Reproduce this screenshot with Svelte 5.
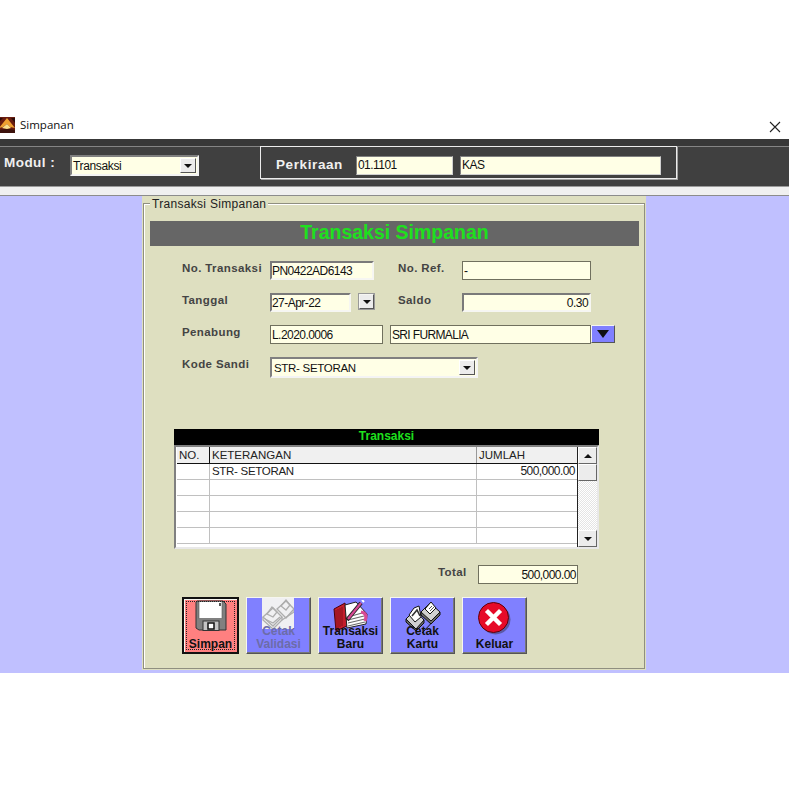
<script>
  const rows = [
    { ket: 'STR- SETORAN', jml: '500,000.00' },
    { ket: '', jml: '' },
    { ket: '', jml: '' },
    { ket: '', jml: '' },
    { ket: '', jml: '' }
  ];
</script>

<div class="page">
  <div class="titlebar">
    <svg class="appicon" width="16" height="16" viewBox="0 0 16 16">
      <rect width="16" height="16" fill="#6a1c10" />
      <path d="M0 1 L4 1 L0 5Z M16 1 L16 6 L12 1Z" fill="#2c0c08" />
      <path d="M8 1 L16 11 L11 10 L8 7 L4 10 L0 11 Z" fill="#f0a030" />
      <path d="M8 7 L12 11 L8 12 L3 11 Z" fill="#fbe08c" />
      <path d="M0 13 L6 12 L11 12 L16 13 L16 16 L0 16Z" fill="#3c120c" />
    </svg>
    <span class="title">Simpanan</span>
    <svg class="close" width="12" height="12" viewBox="0 0 12 12">
      <path d="M1 1 L11 11 M11 1 L1 11" stroke="#222" stroke-width="1.1" fill="none" />
    </svg>
  </div>

  <div class="toolbar">
    <span class="modul">Modul :</span>
    <div class="combo dark">
      <span class="val">Transaksi</span>
      <span class="arrowbtn"><i class="tri"></i></span>
    </div>
    <div class="perk">
      <span class="perk-label">Perkiraan</span>
      <span class="tb tb-dark w97">01.1101</span>
      <span class="tb tb-dark w201">KAS</span>
    </div>
  </div>
  <div class="strip"></div>

  <div class="main">
    <div class="panel">
      <div class="group">
        <span class="legend">Transaksi Simpanan</span>
        <div class="banner">Transaksi Simpanan</div>

        <div class="form">
          <div class="row">
            <span class="lbl">No. Transaksi</span>
            <span class="tb sunk w104">PN0422AD6143</span>
            <span class="lbl lbl2 g24">No. Ref.</span>
            <span class="tb flat w129">-</span>
          </div>
          <div class="row">
            <span class="lbl">Tanggal</span>
            <span class="tb sunk w81">27-Apr-22</span>
            <span class="spin"><i class="tri"></i></span>
            <span class="lbl lbl2 g23">Saldo</span>
            <span class="tb sunk w129 right">0.30</span>
          </div>
          <div class="row">
            <span class="lbl">Penabung</span>
            <span class="tb flat w113">L.2020.0006</span>
            <span class="tb flat w201 g7 name">SRI FURMALIA</span>
            <span class="pick"><i class="tri big"></i></span>
          </div>
          <div class="row">
            <span class="lbl">Kode Sandi</span>
            <div class="combo sandi">
              <span class="val">STR- SETORAN</span>
              <span class="arrowbtn"><i class="tri"></i></span>
            </div>
          </div>
        </div>

        <div class="tablewrap">
          <div class="tabletitle">Transaksi</div>
          <div class="grid">
            <div class="cols">
              <div class="ghead">
                <span class="c1">NO.</span><span class="c2">KETERANGAN</span><span class="c3">JUMLAH</span>
              </div>
              {#each rows as r}
                <div class="grow">
                  <span class="c1"></span><span class="c2">{r.ket}</span><span class="c3 right">{r.jml}</span>
                </div>
              {/each}
            </div>
            <div class="scroll">
              <span class="sbtn"><i class="tri up"></i></span>
              <span class="thumb"></span>
              <span class="track"></span>
              <span class="sbtn"><i class="tri"></i></span>
            </div>
          </div>
        </div>

        <div class="totalrow">
          <span class="lbl total">Total</span>
          <span class="tb flat w100 right">500,000.00</span>
        </div>

        <div class="buttons">
          <button class="btn focus">
            <svg class="ic floppy" width="32" height="32" viewBox="0 0 32 32">
              <path d="M2 1 H28 L31 4 V30 H4 L1 28 V2Z" fill="#808080" stroke="#333" />
              <rect x="4" y="1.5" width="23" height="17" fill="#fff" stroke="#555" stroke-width=".6" />
              <rect x="24" y="3" width="2" height="3" fill="#555" />
              <rect x="8" y="21" width="16" height="9.5" fill="#c4c4c4" stroke="#333" />
              <rect x="13" y="23" width="6" height="6" fill="#fff" stroke="#111" stroke-width="1.5" />
            </svg>
            <span class="cap">Simpan</span>
          </button>
          <button class="btn disabled">
            <span class="whiteblock"></span>
            <svg class="ic icv" width="32" height="30" viewBox="0 0 32 30">
              <g fill="none" stroke="#adadad" stroke-width="1.3">
                <path d="M1 18 L11 9 L20 18 L11 27Z" />
                <path d="M5 15 L10 8 L15 13 L11 18Z" />
                <path d="M3 20 L11 24 L18 18" />
                <path d="M1 18 V21 L11 30 L20 21 V18" />
                <path d="M15 10 L24 2 L32 10 L24 19Z" />
                <path d="M19 7 L24 1 L28 6 L24 11Z" />
                <path d="M20 21 L32 13 V10" />
              </g>
            </svg>
            <span class="cap two">Cetak<br />Validasi</span>
          </button>
          <button class="btn">
            <svg class="ic icb" width="38" height="32" viewBox="0 0 38 32">
              <path d="M1 9 L12 3 L14 26 L3 31Z" fill="#c41e2c" stroke="#4a0008" />
              <path d="M3 10 L3 29 M5 9 L5 28 M7 8 L7 27 M9 7 L9 26" stroke="#7a0c18" stroke-width=".8" />
              <path d="M12 5 L23 2 L34 14 L33 24 L14 28Z" fill="#fff" stroke="#222" />
              <path d="M15 17 L29 13 M15 20 L31 16 M15 23 L32 19 M15 26 L32 22" stroke="#6c6c6c" stroke-width="1.1" />
              <path d="M14 20 L28 3" stroke="#222" stroke-width="4" />
              <path d="M15 19 L28 3" stroke="#d84a94" stroke-width="2.2" />
              <path d="M29 0 L31 2" stroke="#fff" stroke-width="2" />
              <path d="M28 12 Q35 13 32 21" stroke="#d84a94" stroke-width="3.2" fill="none" />
            </svg>
            <span class="cap two">Transaksi<br />Baru</span>
          </button>
          <button class="btn">
            <svg class="ic icp" width="36" height="33" viewBox="0 0 36 33">
              <path d="M35 13 L17 32" fill="none" stroke="#111" />
              <path d="M1 18 V21 L11 30 L19 22 V19Z" fill="#6a6a6a" stroke="#111" />
              <path d="M1 18 L10 9 L19 19 L11 28Z" fill="#d0d0d0" stroke="#111" />
              <path d="M4 14 L9 7 L14 5 L16 16 L10 21Z" fill="#fff" stroke="#111" />
              <path d="M7 15 L12 9 L15 15" fill="none" stroke="#333" stroke-width="1.6" />
              <path d="M16 11 V14 L26 23 L35 14 V11Z" fill="#6a6a6a" stroke="#111" />
              <path d="M16 11 L25 2 L35 11 L26 20Z" fill="#d0d0d0" stroke="#111" />
              <path d="M20 8 L26 1 L31 7 L25 13Z" fill="#fff" stroke="#111" />
              <path d="M24 8 L27 5 M25 10 L29 6" stroke="#555" />
            </svg>
            <span class="cap two">Cetak<br />Kartu</span>
          </button>
          <button class="btn">
            <svg class="ic ick" width="34" height="34" viewBox="0 0 34 34">
              <circle cx="17.5" cy="17.5" r="15" fill="#5a5aa8" />
              <circle cx="15.5" cy="15.5" r="15" fill="#e60a28" stroke="#60000a" />
              <path d="M10 10 L21 21 M21 10 L10 21" stroke="#fff" stroke-width="4.4" stroke-linecap="square" />
            </svg>
            <span class="cap">Keluar</span>
          </button>
        </div>
      </div>
    </div>
  </div>
</div>

<style>
  :global(body) {
    margin: 0;
    background: #fff;
    font-family: "Liberation Sans", Arial, sans-serif;
  }
  .page {
    width: 789px;
    height: 789px;
    overflow: hidden;
    display: flex;
    flex-direction: column;
    padding-top: 110px;
    box-sizing: border-box;
  }
  .titlebar {
    height: 29px;
    flex: none;
    display: flex;
    align-items: center;
    background: #fff;
  }
  .appicon { margin-left: -1px; margin-top: 1px; }
  .title {
    margin-left: 5px;
    font: 11.5px "Open Sans", sans-serif;
    color: #111;
  }
  .close { margin-left: auto; margin-right: 8px; margin-top: 5px; }

  .toolbar {
    height: 48px;
    flex: none;
    background: linear-gradient(#383838 0 7px, #858585 7px 8px, #404040 8px);
    border-bottom: 1px solid #9a9a9a;
    box-sizing: border-box;
    display: flex;
    align-items: flex-start;
  }
  .modul {
    margin: 15px 0 0 4px;
    width: 66px;
    font: bold 13.5px/18px "Liberation Sans", sans-serif;
    letter-spacing: .45px;
    color: #f0f0f0;
    white-space: nowrap;
  }
  .combo {
    display: flex;
    align-items: center;
    justify-content: space-between;
    box-sizing: border-box;
    background: #ffffe6;
    border: 2px solid;
    border-color: #808080 #f4f4f4 #f4f4f4 #808080;
    padding-right: 1px;
    color: #111;
    font-size: 12px;
    letter-spacing: -.35px;
  }
  .combo.dark {
    width: 129px;
    height: 21px;
    margin-top: 16px;
  }
  .combo.sandi { width: 208px; height: 21px; letter-spacing: -.3px; font-size: 11.5px; }
  .val { padding-left: 1px; white-space: nowrap; }
  .sandi .val { padding-left: 2px; }
  .arrowbtn {
    width: 16px;
    height: 15px;
    background: #ececec;
    border: 1px solid;
    border-color: #fff #555 #555 #fff;
    box-sizing: border-box;
    display: flex;
    align-items: center;
    justify-content: center;
  }
  .tri {
    display: block;
    width: 0;
    height: 0;
    border-left: 4px solid transparent;
    border-right: 4px solid transparent;
    border-top: 4px solid #111;
  }
  .tri.up { border-top: 0; border-bottom: 4px solid #111; }
  .tri.big {
    border-left-width: 6px;
    border-right-width: 6px;
    border-top: 8px solid #111;
  }
  .perk {
    margin: 7px 0 0 61px;
    width: 417px;
    height: 33px;
    box-sizing: border-box;
    border: 1px solid #ececec;
    box-shadow: 1px 1px 0 #a0a0a0;
    display: flex;
    align-items: center;
    padding-left: 15px;
  }
  .perk-label {
    font: bold 13.5px/18px "Liberation Sans", sans-serif;
    letter-spacing: .6px;
    color: #f0f0f0;
    width: 80px;
    white-space: nowrap;
    margin-top: 4px;
  }
  .tb {
    display: flex;
    align-items: center;
    height: 19px;
    box-sizing: border-box;
    background: #ffffe6;
    color: #111;
    font-size: 12px;
    letter-spacing: -.55px;
    padding: 0 1px 0 1px;
    white-space: nowrap;
  }
  .name { letter-spacing: -.65px; }
  .right { justify-content: flex-end; text-align: right; }
  .tb-dark { border: 1px solid; border-color: #808080 #d0d0d0 #d0d0d0 #808080; margin-top: 5px; }
  .tb-dark + .tb-dark { margin-left: 7px; }
  .sunk { border: 2px solid; border-color: #7a7a7a #f6f6f2 #f6f6f2 #7a7a7a; padding-left: 0; }
  .flat { border: 1px solid #70705e; }
  .w81 { width: 81px; }
  .w97 { width: 97px; }
  .w100 { width: 100px; }
  .w104 { width: 104px; }
  .w113 { width: 113px; }
  .w129 { width: 129px; }
  .w201 { width: 201px; }
  .g7 { margin-left: 7px; }
  .g23 { margin-left: 23px; }
  .g24 { margin-left: 24px; }

  .strip {
    height: 8px;
    flex: none;
    background: #f0f0f0;
    border-bottom: 1px solid #8c8c8c;
  }
  .main {
    height: 477px;
    flex: none;
    background: #c0c0ff;
    padding-left: 142px;
    box-sizing: border-box;
  }
  .panel {
    width: 504px;
    height: 474px;
    box-sizing: border-box;
    background: #dedfc0;
    padding: 7px 1px 1px;
  }
  .group {
    position: relative;
    height: 100%;
    box-sizing: border-box;
    border: 1px solid #8f8f80;
    box-shadow: inset 1px 1px 0 #fff;
    padding: 17px 5px 0 6px;
  }
  .legend {
    position: absolute;
    left: 6px;
    top: -7px;
    padding: 0 2px;
    background: #dedfc0;
    font-size: 12px;
    line-height: 14px;
    letter-spacing: .3px;
    color: #222;
  }
  .banner {
    height: 25px;
    width: 489px;
    background: #666;
    color: #1ee01e;
    font: bold 19.5px/23px "Liberation Sans", sans-serif;
    text-align: center;
  }
  .form { margin: 15px 0 0 32px; }
  .row { height: 32px; display: flex; align-items: flex-start; }
  .lbl {
    width: 88px;
    flex: none;
    font: bold 11.5px/15px "Liberation Sans", sans-serif;
    letter-spacing: .4px;
    color: #444;
    white-space: nowrap;
  }
  .lbl2 { width: 64px; }
  .spin {
    width: 17px;
    height: 17px;
    margin-left: 7px;
    box-sizing: border-box;
    background: #ececec;
    border: 2px solid;
    border-color: #f6f6f2 #555 #555 #f6f6f2;
    outline: 1px solid #999;
    outline-offset: -1px;
    display: flex;
    align-items: center;
    justify-content: center;
  }
  .pick {
    width: 24px;
    height: 18px;
    background: #8080ff;
    box-sizing: border-box;
    border: 1px solid;
    border-color: #f4f4f4 #555 #555 #f4f4f4;
    display: flex;
    align-items: center;
    justify-content: center;
  }

  .tablewrap { margin: 40px 0 0 24px; width: 425px; }
  .tabletitle {
    height: 16px;
    background: #000;
    color: #1ee01e;
    font: bold 12px/15px "Liberation Sans", sans-serif;
    text-align: center;
  }
  .grid {
    height: 104px;
    background: #fff;
    box-sizing: border-box;
    border: 2px solid;
    border-color: #808080 #e8e8e8 #e8e8e8 #808080;
    padding-left: 1px;
    display: flex;
    overflow: hidden;
  }
  .cols { width: 400px; flex: none; border-right: 1px solid #222; overflow: hidden; }
  .ghead {
    height: 17px;
    display: flex;
    background: #f0f0f0;
    border-bottom: 1px solid #111;
    box-sizing: border-box;
    font-size: 11.5px;
    line-height: 17px;
    color: #222;
  }
  .grow {
    height: 16px;
    display: flex;
    box-sizing: border-box;
    border-bottom: 1px solid #c0c0c0;
    font-size: 11.5px;
    line-height: 15px;
    color: #222;
    letter-spacing: -.3px;
  }
  .c1 { width: 33px; flex: none; padding-left: 2px; box-sizing: border-box; border-right: 1px solid #c0c0c0; }
  .c2 { width: 267px; flex: none; padding-left: 2px; box-sizing: border-box; border-right: 1px solid #c0c0c0; }
  .c3 { width: 100px; flex: none; padding: 0 2px; box-sizing: border-box; }
  .grow .c3 { font-size: 12px; letter-spacing: -.55px; }
  .ghead .c1 { border-right-color: #111; }
  .ghead .c2 { border-right-color: #999; }
  .scroll { width: 19px; flex: none; display: flex; flex-direction: column; background: #f2f2f2; }
  .sbtn, .thumb {
    height: 17px;
    flex: none;
    box-sizing: border-box;
    background: #ececec;
    border: 1px solid;
    border-color: #fff #666 #666 #fff;
    display: flex;
    align-items: center;
    justify-content: center;
  }
  .track {
    flex: 1;
    background-image: repeating-conic-gradient(#fff 0 25%, #e4e4e4 0 50%);
    background-size: 2px 2px;
  }

  .totalrow { margin: 16px 0 0 288px; display: flex; height: 19px; }
  .total { width: 40px; }

  .buttons { margin: 13px 0 0 32px; display: flex; gap: 7px; }
  .btn {
    position: relative;
    width: 65px;
    height: 57px;
    padding: 0 0 2px;
    box-sizing: border-box;
    background: #8080ff;
    border: 1px solid;
    border-color: #f6f6f0 #555 #555 #f6f6f0;
    box-shadow: inset -1px -1px 0 #777;
    display: flex;
    flex-direction: column;
    justify-content: flex-end;
    align-items: center;
    font: bold 12px/13px "Liberation Sans", sans-serif;
    letter-spacing: 0;
    color: #111;
  }
  .btn.focus {
    width: 57px;
    padding-bottom: 1px;
    background: #ff8080;
    border: 2px solid #111;
    box-shadow: inset 1px 1px 0 #f6f6f0;
  }
  .btn.focus::after {
    content: "";
    position: absolute;
    inset: 2px;
    border: 1px dotted #222;
  }
  .ic { position: absolute; }
  .floppy { left: 11px; top: 1px; }
  .icv { left: 15px; top: 1px; }
  .icb { left: 14px; top: 2px; }
  .icp { left: 14px; top: 3px; }
  .ick { left: 15px; top: 4px; }
  .cap { position: relative; text-align: center; }
  .whiteblock {
    position: absolute;
    left: 15px;
    top: 0;
    width: 32px;
    height: 31px;
    background: #f0f0f2;
  }
  .disabled { color: #6c6ca8; }
</style>
